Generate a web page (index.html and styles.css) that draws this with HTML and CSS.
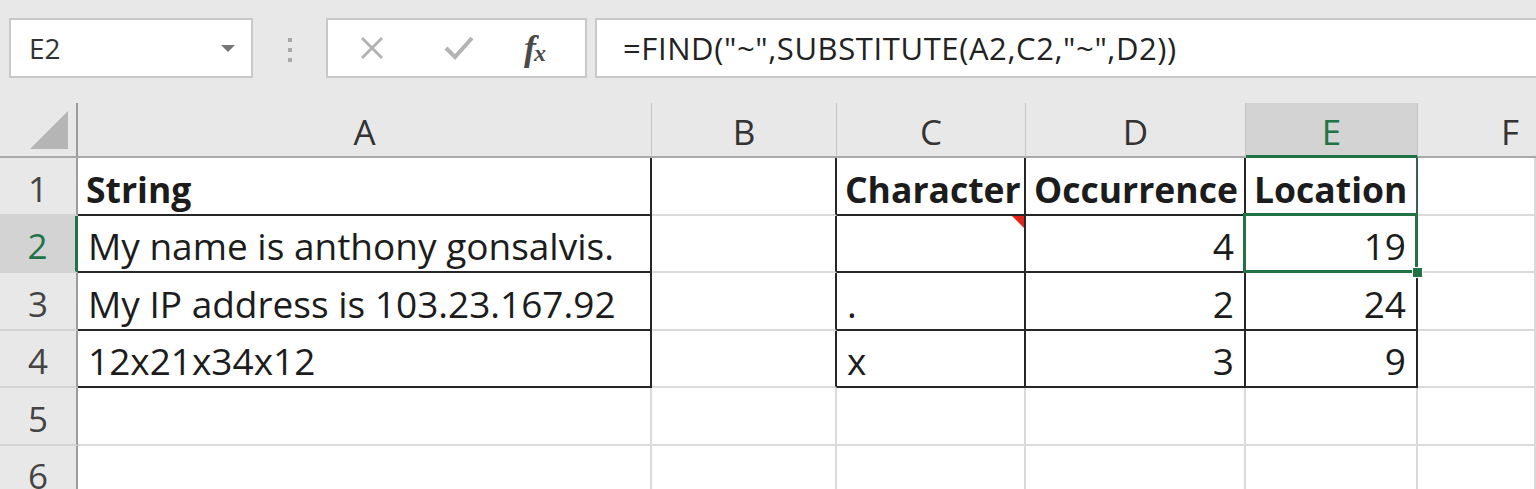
FILE: index.html
```html
<!DOCTYPE html>
<html lang="en">
<head>
    <meta charset="UTF-8">
    <title>FIND nth occurrence</title>
    <link rel="stylesheet" href="styles.css">
</head>
<body>
    <div class="toolbar">
        <div class="namebox">
            <span>E2</span>
            <span class="caret"></span>
        </div>
        <div class="grip"><i></i><i></i><i></i></div>
        <div class="fxbox">
            <svg class="ico" width="26" height="26" viewBox="0 0 26 26">
                <path d="M3 3 L23 23 M23 3 L3 23" stroke="#b3b3b3" stroke-width="3" fill="none"/>
            </svg>
            <svg class="ico" width="30" height="26" viewBox="0 0 30 26">
                <path d="M2 13 L11 22 L28 3" stroke="#b3b3b3" stroke-width="4" fill="none"/>
            </svg>
            <span class="fx"><i>f</i><sub>x</sub></span>
        </div>
        <div class="formula">=FIND("~",SUBSTITUTE(A2,C2,"~",D2))</div>
    </div>

    <div class="sheet">
        <!-- column headers -->
        <div class="hd corner">
            <svg width="38" height="38" viewBox="0 0 38 38"><polygon points="38,0 38,38 0,38" fill="#b5b5b5"/></svg>
        </div>
        <div class="hd col">A</div>
        <div class="hd col">B</div>
        <div class="hd col">C</div>
        <div class="hd col">D</div>
        <div class="hd col sel">E</div>
        <div class="hd col last">F</div>

        <!-- row 1 -->
        <div class="rh">1</div>
        <div class="c box bold">String</div>
        <div class="c rdark"></div>
        <div class="c box bold">Character</div>
        <div class="c box bold">Occurrence</div>
        <div class="c box bold e1">Location</div>
        <div class="c"></div>

        <!-- row 2 -->
        <div class="rh sel">2</div>
        <div class="c box">My name is anthony gonsalvis.</div>
        <div class="c rdark"></div>
        <div class="c box note"></div>
        <div class="c box num">4</div>
        <div class="c box num active">19</div>
        <div class="c"></div>

        <!-- row 3 -->
        <div class="rh">3</div>
        <div class="c box">My IP address is 103.23.167.92</div>
        <div class="c rdark"></div>
        <div class="c box">.</div>
        <div class="c box num">2</div>
        <div class="c box num">24</div>
        <div class="c"></div>

        <!-- row 4 -->
        <div class="rh">4</div>
        <div class="c box">12x21x34x12</div>
        <div class="c rdark"></div>
        <div class="c box">x</div>
        <div class="c box num">3</div>
        <div class="c box num">9</div>
        <div class="c"></div>

        <!-- row 5 -->
        <div class="rh">5</div>
        <div class="c"></div>
        <div class="c"></div>
        <div class="c"></div>
        <div class="c"></div>
        <div class="c"></div>
        <div class="c"></div>

        <!-- row 6 -->
        <div class="rh">6</div>
        <div class="c"></div>
        <div class="c"></div>
        <div class="c"></div>
        <div class="c"></div>
        <div class="c"></div>
        <div class="c"></div>
    </div>
</body>
</html>
```

FILE: styles.css
```css
/* sheet view */
body {
    margin: 0;
    width: 1536px;
    height: 489px;
    overflow: hidden;
    background-color: #fff;
    font-family: "Open Sans", "Liberation Sans", sans-serif;
    color: #1c1c1c;
}

.toolbar {
    display: flex;
    align-items: flex-start;
    height: 103px;
    box-sizing: border-box;
    padding: 18px 0 0 9px;
    background-color: #e8e8e8;
}

.namebox,
.fxbox,
.formula {
    height: 60px;
    box-sizing: border-box;
    background-color: #fff;
    border: 2px solid #c8c8c8;
}

.namebox {
    width: 244px;
    display: flex;
    align-items: center;
    justify-content: space-between;
    padding: 0 16px 0 18px;
    font-size: 28px;
    color: #333;
}

.caret {
    width: 0;
    height: 0;
    border-left: 7px solid transparent;
    border-right: 7px solid transparent;
    border-top: 7px solid #777;
}

.grip {
    display: flex;
    flex-direction: column;
    gap: 6px;
    margin: 20px 34px 0 35px;
}

.grip i {
    width: 4px;
    height: 4px;
    background-color: #a8a8a8;
}

.fxbox {
    width: 261px;
    display: flex;
    align-items: center;
    padding: 0 0 0 31px;
}

.fxbox .ico:first-child {
    margin-right: 59px;
}

.fx {
    margin-left: 50px;
    font-family: "Liberation Serif", serif;
    font-size: 36px;
    font-weight: 700;
    color: #4a4a4a;
    line-height: 1;
}

.fx sub {
    font-size: 24px;
    font-style: italic;
    vertical-align: -1px;
    margin-left: -2px;
}

.formula {
    flex: 1;
    margin-left: 8px;
    border-right: none;
    display: flex;
    align-items: center;
    padding-left: 26px;
    font-size: 31px;
    letter-spacing: 0.6px;
    color: #222;
}

.sheet {
    display: grid;
    grid-template-columns: 78px 574px 185px 189px 220px 172px 1fr;
    grid-template-rows: 55px repeat(6, 57.5px);
}

.hd {
    background-color: #e8e8e8;
    border-bottom: 2px solid #a9a9a9;
    border-right: 1px solid #c4c4c4;
    box-sizing: border-box;
}

.col {
    display: flex;
    align-items: center;
    justify-content: center;
    font-size: 35px;
    color: #333;
    padding-top: 4px;
}

/* column F is wider than the window, its letter sits past the middle */
.col.last {
    border-right: none;
    padding-left: 66px;
}

.corner {
    display: flex;
    align-items: flex-end;
    justify-content: flex-end;
    padding: 0 8px 7px 0;
    border-right: 2px solid #9c9c9c;
}

.hd.sel {
    background-color: #d3d3d3;
    color: #217346;
    border-bottom: 3px solid #217346;
}

.rh {
    background-color: #e8e8e8;
    border-right: 2px solid #9c9c9c;
    border-bottom: 2px solid #d4d4d4;
    box-sizing: border-box;
    display: flex;
    align-items: flex-end;
    justify-content: center;
    padding-bottom: 8px;
    font-size: 35px;
    line-height: 34px;
    color: #444;
    overflow: hidden;
}

.rh.sel {
    background-color: #d3d3d3;
    color: #217346;
    border-right: 3px solid #217346;
}

.c {
    position: relative;
    box-sizing: border-box;
    border-right: 2px solid #dadada;
    border-bottom: 2px solid #dadada;
    display: flex;
    align-items: flex-end;
    padding: 0 10px 8px 10px;
    font-size: 37px;
    line-height: 34px;
    white-space: nowrap;
}

.c.box {
    border-right-color: #262626;
    border-bottom-color: #262626;
}

.c.rdark {
    border-right-color: #262626;
}

.bold {
    font-weight: 700;
    font-size: 35.5px;
    padding-left: 8px;
}

.num {
    justify-content: flex-end;
}

.c.e1 {
    border-right-color: #3f5d4c;
}

.note::after {
    content: "";
    position: absolute;
    top: 0;
    right: 0;
    border-top: 12px solid #e3241c;
    border-left: 12px solid transparent;
}

.active::before {
    content: "";
    position: absolute;
    top: -3px;
    left: -3px;
    right: -2px;
    bottom: -2px;
    border: 3px solid #217346;
    pointer-events: none;
}

.active::after {
    content: "";
    position: absolute;
    right: -7px;
    bottom: -7px;
    width: 9px;
    height: 9px;
    background-color: #217346;
    border: 1px solid #fff;
    z-index: 2;
}
```
